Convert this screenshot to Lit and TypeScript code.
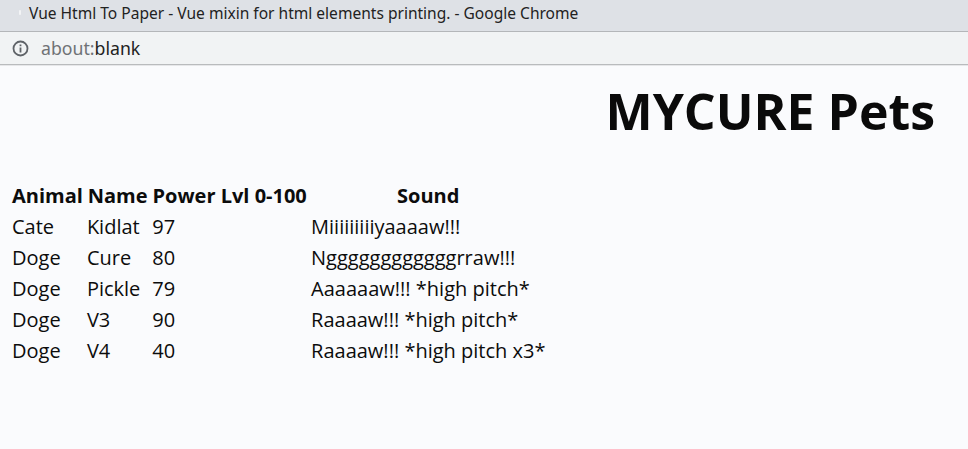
import { LitElement, html, css } from "lit";
import { customElement } from "lit/decorators.js";

const rows = [
  ["Cate", "Kidlat", "97", "Miiiiiiiiiyaaaaw!!!"],
  ["Doge", "Cure", "80", "Nggggggggggggrraw!!!"],
  ["Doge", "Pickle", "79", "Aaaaaaw!!! *high pitch*"],
  ["Doge", "V3", "90", "Raaaaw!!! *high pitch*"],
  ["Doge", "V4", "40", "Raaaaw!!! *high pitch x3*"],
];

@customElement("app-root")
export class AppRoot extends LitElement {
  static styles = css`
    :host { display: block; width: 968px; height: 449px; overflow: hidden; background: #fafbfd; font-family: "Open Sans", sans-serif; color: #0c0c0c; }
    .title { height: 32px; box-sizing: border-box; background: #dee1e6; border-bottom: 1px solid #b4b6b9; display: flex; align-items: center; gap: 8px; padding: 0 0 6px 19px; font: 15.55px "Noto Sans", sans-serif; color: #222; }
    .fav { width: 2px; height: 5px; background: #f3f4f6; border-radius: 1px; }
    .bar { height: 33px; box-sizing: border-box; background: #f1f3f4; border-bottom: 1px solid #b9bbbd; box-shadow: 0 1px 0 #e6e7e9; display: flex; align-items: center; gap: 12px; padding: 0 0 0 12px; font: 17.7px "Noto Sans", sans-serif; color: #222; }
    .bar svg { display: block; }
    .scheme { color: #6f7276; }
    h1 { margin: 0; padding: 16px 33px 0 0; text-align: right; font-size: 50px; font-weight: 700; line-height: 60px; color: #0a0a0a; }
    table { margin: 39px 0 0 9px; border-collapse: separate; border-spacing: 2px 0; font-size: 20px; }
    th { font-weight: 700; height: 31px; padding: 0 1px; white-space: nowrap; }
    td { height: 31px; padding: 0 1px; white-space: nowrap; }
    .name { min-width: 61.4px; }
    .power { min-width: 154.8px; }
    .sound { min-width: 234px; }
  `;
  render() {
    return html`
      <div class="title"><span class="fav"></span><span>Vue Html To Paper - Vue mixin for html elements printing. - Google Chrome</span></div>
      <div class="bar">
        <svg width="17" height="17" viewBox="0 0 17 17" fill="none" stroke="#5f6368">
          <circle cx="8.5" cy="8.5" r="7" stroke-width="1.8"></circle>
          <path d="M8.5 7.5v5M8.5 4.5v1.8" stroke-width="1.8"></path>
        </svg>
        <span><span class="scheme">about:</span>blank</span>
      </div>
      <h1>MYCURE Pets</h1>
      <table>
        <thead><tr><th>Animal</th><th class="name">Name</th><th class="power">Power Lvl 0-100</th><th class="sound">Sound</th></tr></thead>
        <tbody>${rows.map((r) => html`<tr>${r.map((c) => html`<td>${c}</td>`)}</tr>`)}</tbody>
      </table>
    `;
  }
}
